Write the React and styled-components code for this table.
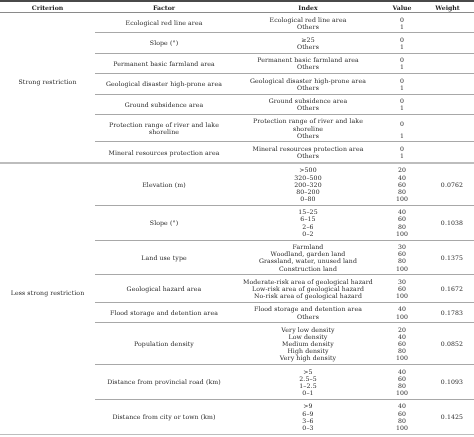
import React from 'react';
import styled, { createGlobalStyle } from 'styled-components';

const LH = 7.2;

const Global = createGlobalStyle`
  html, body { margin: 0; padding: 0; background: #fff; }
  body { width: 474px; height: 437px; overflow: hidden; }
`;

const Table = styled.table`
  width: 474px;
  border-collapse: collapse;
  table-layout: fixed;
  font-family: "DejaVu Serif", "Liberation Serif", serif;
  font-size: 6.2px;
  letter-spacing: 0.1px;
  color: #262626;
  border-top: 2px solid #4a4a4a;
  border-bottom: 1px solid #bdbdbd;
  filter: grayscale(1);
`;

const Col = styled.col`
  width: ${p => p.$w}px;
`;

const HeadCell = styled.th`
  font-weight: bold;
  letter-spacing: 0;
  color: #1e1e1e;
  text-align: center;
  padding: 1.5px 0 1.3px;
  line-height: ${LH}px;
  border-bottom: 1px solid #8a8a8a;
`;

const Row = styled.tr`
  & > td {
    border-top: ${p => (p.$section ? '2px solid #bdbdbd' : '1px solid #a8a8a8')};
  }
  &:first-child > td {
    border-top: none;
  }
`;

const Cell = styled.td`
  text-align: center;
  vertical-align: middle;
  padding: 2.5px 1px;
  line-height: ${LH}px;
  white-space: nowrap;
`;

const CriterionCell = styled(Cell)`
  padding-bottom: 14px;
`;

const WeightCell = styled(Cell)`
  padding-left: 10px;
`;

const Line = styled.div`
  height: ${p => (p.$span || 1) * LH}px;
  line-height: ${p => (p.$span || 1) * LH}px;
`;

const strong = [
  { factor: ['Ecological red line area'], items: [[['Ecological red line area'], '0'], [['Others'], '1']] },
  { factor: ['Slope (°)'], items: [[['≥25'], '0'], [['Others'], '1']] },
  { factor: ['Permanent basic farmland area'], items: [[['Permanent basic farmland area'], '0'], [['Others'], '1']] },
  { factor: ['Geological disaster high-prone area'], items: [[['Geological disaster high-prone area'], '0'], [['Others'], '1']] },
  { factor: ['Ground subsidence area'], items: [[['Ground subsidence area'], '0'], [['Others'], '1']] },
  {
    factor: ['Protection range of river and lake', 'shoreline'],
    items: [[['Protection range of river and lake', 'shoreline'], '0'], [['Others'], '1']],
  },
  { factor: ['Mineral resources protection area'], items: [[['Mineral resources protection area'], '0'], [['Others'], '1']] },
];

const mk = (pairs) => pairs.map(([a, b]) => [[a], b]);

const less = [
  { factor: ['Elevation (m)'], weight: '0.0762', items: mk([['>500', '20'], ['320–500', '40'], ['200–320', '60'], ['80–200', '80'], ['0–80', '100']]) },
  { factor: ['Slope (°)'], weight: '0.1038', items: mk([['15–25', '40'], ['6–15', '60'], ['2–6', '80'], ['0–2', '100']]) },
  {
    factor: ['Land use type'], weight: '0.1375',
    items: mk([['Farmland', '30'], ['Woodland, garden land', '60'], ['Grassland, water, unused land', '80'], ['Construction land', '100']]),
  },
  {
    factor: ['Geological hazard area'], weight: '0.1672',
    items: mk([['Moderate-risk area of geological hazard', '30'], ['Low-risk area of geological hazard', '60'], ['No-risk area of geological hazard', '100']]),
  },
  { factor: ['Flood storage and detention area'], weight: '0.1783', items: mk([['Flood storage and detention area', '40'], ['Others', '100']]) },
  {
    factor: ['Population density'], weight: '0.0852',
    items: mk([['Very low density', '20'], ['Low density', '40'], ['Medium density', '60'], ['High density', '80'], ['Very high density', '100']]),
  },
  { factor: ['Distance from provincial road (km)'], weight: '0.1093', items: mk([['>5', '40'], ['2.5–5', '60'], ['1–2.5', '80'], ['0–1', '100']]) },
  { factor: ['Distance from city or town (km)'], weight: '0.1425', items: mk([['>9', '40'], ['6–9', '60'], ['3–6', '80'], ['0–3', '100']]) },
];

const sections = [
  { name: 'Strong restriction', rows: strong },
  { name: 'Less strong restriction', rows: less },
];

function DataRow({ row, first, section, criterion, span }) {
  return (
    <Row $section={section && first}>
      {first && <CriterionCell rowSpan={span}>{criterion}</CriterionCell>}
      <Cell>
        {row.factor.map((t, i) => (
          <Line key={i}>{t}</Line>
        ))}
      </Cell>
      <Cell>
        {row.items.flatMap(([lines], i) => lines.map((t, j) => <Line key={i + '-' + j}>{t}</Line>))}
      </Cell>
      <Cell>
        {row.items.map(([lines, v], i) => (
          <Line key={i} $span={lines.length}>{v}</Line>
        ))}
      </Cell>
      <WeightCell>{row.weight || ''}</WeightCell>
    </Row>
  );
}

export default function App() {
  return (
    <>
      <Global />
      <Table>
        <colgroup>
          <Col $w={95} />
          <Col $w={138} />
          <Col $w={150} />
          <Col $w={38} />
          <Col $w={53} />
        </colgroup>
        <thead>
          <tr>
            <HeadCell>Criterion</HeadCell>
            <HeadCell>Factor</HeadCell>
            <HeadCell>Index</HeadCell>
            <HeadCell>Value</HeadCell>
            <HeadCell>Weight</HeadCell>
          </tr>
        </thead>
        <tbody>
          {sections.map((s, si) =>
            s.rows.map((r, ri) => (
              <DataRow
                key={si + '-' + ri}
                row={r}
                first={ri === 0}
                section={si > 0}
                criterion={s.name}
                span={s.rows.length}
              />
            ))
          )}
        </tbody>
      </Table>
    </>
  );
}
